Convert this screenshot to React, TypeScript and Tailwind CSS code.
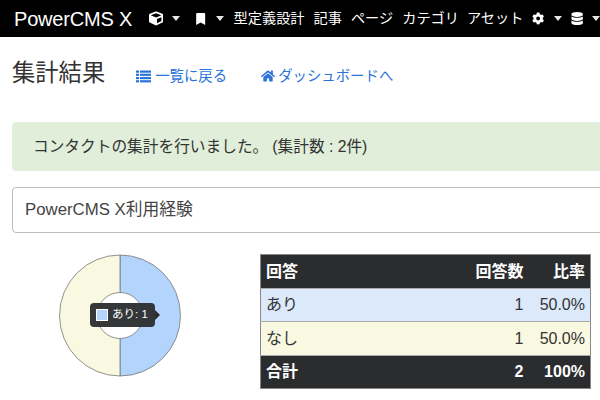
import { FaCube, FaBookmark, FaCog, FaDatabase, FaHome } from 'react-icons/fa';

const font = { fontFamily: '"Liberation Sans", "Noto Sans CJK JP", sans-serif' };

function Caret() {
  return <span className="ml-[9px] inline-block h-0 w-0 border-x-[4.5px] border-t-[5px] border-x-transparent border-t-white/90" />;
}

function ListIcon() {
  return (
    <svg width="15" height="13" viewBox="0 0 15 13" fill="currentColor" className="mr-[4px]">
      <rect x="0" y="0.5" width="3" height="2.2" />
      <rect x="4" y="0.5" width="11" height="2.2" />
      <rect x="0" y="3.7" width="3" height="2.2" />
      <rect x="4" y="3.7" width="11" height="2.2" />
      <rect x="0" y="7" width="3" height="2.2" />
      <rect x="4" y="7" width="11" height="2.2" />
      <rect x="0" y="10.2" width="3" height="2.2" />
      <rect x="4" y="10.2" width="11" height="2.2" />
    </svg>
  );
}

function Donut() {
  return (
    <div className="relative h-[124px] w-[124px]">
      <svg width="124" height="124" viewBox="0 0 124 124">
        <path d="M62 1 A60.5 60.5 0 0 1 62 122 L62 84.5 A23 23 0 0 0 62 38.5 Z" fill="#b3d4fc" stroke="#777777" strokeWidth="0.8" />
        <path d="M62 1 A60.5 60.5 0 0 0 62 122 L62 84.5 A23 23 0 0 1 62 38.5 Z" fill="#f9f8e0" stroke="#777777" strokeWidth="0.8" />
      </svg>
      {/* tooltip */}
      <div className="absolute left-[32px] top-[49px] flex h-[24px] w-[65px] items-center rounded-[4px] bg-[#2b2c2e]/95 pl-[6px] text-[11.5px] text-white">
        <span className="mr-[4px] h-[12px] w-[12px] border border-white bg-[#b3d4fc]" />
        <span>あり: 1</span>
        <span className="absolute left-full top-[7px] h-0 w-0 border-y-[5px] border-l-[5px] border-y-transparent border-l-[#2b2c2e]" />
      </div>
    </div>
  );
}

export default function App() {
  return (
    <div style={font} className="h-[400px] w-[600px] overflow-hidden bg-white text-[#333333]">
      <nav className="flex h-[37px] items-center whitespace-nowrap bg-black text-[14.2px] text-white">
        <span className="ml-[14px] text-[20px] leading-none tracking-[-0.2px]">PowerCMS X</span>
        <FaCube className="ml-[17px] text-[15px]" />
        <Caret />
        <FaBookmark className="ml-[15px] text-[12px]" />
        <Caret />
        <span className="ml-[10px]">型定義設計</span>
        <span className="ml-[9px]">記事</span>
        <span className="ml-[9px]">ページ</span>
        <span className="ml-[9px]">カテゴリ</span>
        <span className="ml-[8px]">アセット</span>
        <FaCog className="ml-[9px] text-[13px]" />
        <Caret />
        <FaDatabase className="ml-[9px] text-[13px]" />
        <Caret />
      </nav>

      <div className="flex h-[85px] items-center pb-[12px] pl-[12px]">
        <h1 className="text-[23.3px] font-normal leading-none">集計結果</h1>
        <a className="ml-[31px] mt-[6px] flex items-center text-[14.4px] text-[#2a73d9]">
          <ListIcon />
          一覧に戻る
        </a>
        <a className="ml-[34px] mt-[6px] flex items-center text-[14.4px] text-[#2a73d9]">
          <FaHome className="mr-[3px] text-[14px]" />
          ダッシュボードへ
        </a>
      </div>

      <div className="w-[640px] pl-[12px]">
        <div className="flex h-[49px] items-center rounded-[4px] bg-[#e0eeda] pl-[21px] text-[15.7px]">
          コンタクトの集計を行いました。
          <span className="ml-[4px]">(集計数 : 2件)</span>
        </div>
        <div className="mt-[16px] flex h-[46px] items-center rounded-[4px] border border-[#bbbbbb] pl-[12px] text-[16.8px] text-[#444444]">
          PowerCMS X利用経験
        </div>
      </div>

      <div className="mt-[21px] flex">
        <div className="ml-[58px]">
          <Donut />
        </div>
        <table className="ml-[78px] h-[135px] w-[331px] border-collapse border border-[#888888] text-[16px]">
          <thead>
            <tr className="h-[34px] border-b border-[#aaaaaa] bg-[#2b2c2e] text-white">
              <th className="px-[5px] text-left font-bold">回答</th>
              <th className="px-[5px] text-right font-bold">回答数</th>
              <th className="w-[62px] px-[5px] text-right font-bold">比率</th>
            </tr>
          </thead>
          <tbody>
            <tr className="h-[33px] border-b border-[#aaaaaa] bg-[#dbe9fb]">
              <td className="px-[5px]">あり</td>
              <td className="px-[5px] text-right">1</td>
              <td className="px-[5px] text-right">50.0%</td>
            </tr>
            <tr className="h-[34px] border-b border-[#aaaaaa] bg-[#f9f8e0]">
              <td className="px-[5px]">なし</td>
              <td className="px-[5px] text-right">1</td>
              <td className="px-[5px] text-right">50.0%</td>
            </tr>
            <tr className="h-[33px] bg-[#2b2c2e] font-bold text-white">
              <td className="px-[5px]">合計</td>
              <td className="px-[5px] text-right">2</td>
              <td className="px-[5px] text-right">100%</td>
            </tr>
          </tbody>
        </table>
      </div>
    </div>
  );
}
